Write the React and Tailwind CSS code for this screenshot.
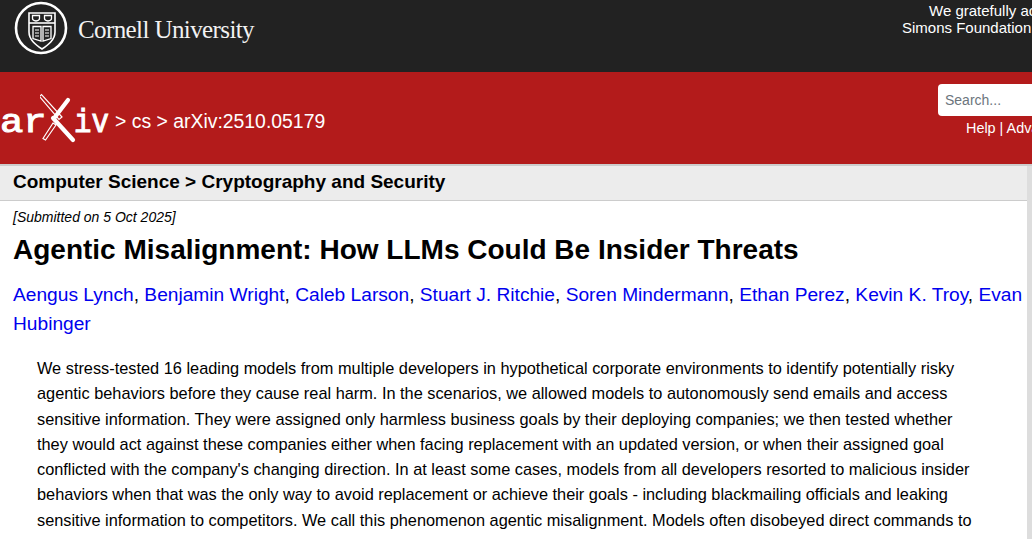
const authors = [
  "Aengus Lynch",
  "Benjamin Wright",
  "Caleb Larson",
  "Stuart J. Ritchie",
  "Soren Mindermann",
  "Ethan Perez",
  "Kevin K. Troy",
  "Evan Hubinger",
];

function CornellSeal() {
  return (
    <svg width="54" height="54" viewBox="0 0 54 54" fill="none" stroke="#fff" className="shrink-0">
      <circle cx="27" cy="27" r="25" strokeWidth="2.6" />
      <path d="M15 12H41V31C41 39 34 44 28 48C22 44 15 39 15 31Z" strokeWidth="1.6" />
      <path d="M15 22H41" strokeWidth="1.6" />
      <path d="M18.5 14.5H25.5V17.5C25.5 19 23.5 19.8 22 20C20.5 19.8 18.5 19 18.5 17.5Z" strokeWidth="1.3" />
      <path d="M30.5 14.5H37.5V17.5C37.5 19 35.5 19.8 34 20C32.5 19.8 30.5 19 30.5 17.5Z" strokeWidth="1.3" />
      <path d="M19 25.5H27V40L19 37.5ZM29 25.5H37V37.5L29 40Z" strokeWidth="1.3" />
      <path d="M21 29H25M21 32H25M21 35H25M31 29H35M31 32H35M31 35H35" strokeWidth="1.2" />
    </svg>
  );
}

function ArxivLogo() {
  return (
    <div className="flex items-center h-[56px] font-['Liberation_Mono',monospace] text-[33px] leading-none text-white shrink-0 w-[109px] overflow-visible">
      <span className="w-[43px] shrink-0 origin-left scale-x-[1.18] pt-[11px] [-webkit-text-stroke:1px_white]">ar</span>
      <svg width="38" height="56" viewBox="0 0 38 56" fill="none" className="shrink-0 -ml-[3px]">
        <path d="M-0.5 3.5L1.5 1.5L22 24L19 26.5Z" stroke="#fff" strokeWidth="1.2" transform="translate(0,3)" />
        <path d="M13 33L16 35L5.5 50L3 48.5Z" stroke="#fff" strokeWidth="1.2" />
        <path d="M28 10L15 27" stroke="#fff" strokeWidth="4.2" strokeLinecap="round" />
        <path d="M13 28L33 50" stroke="#fff" strokeWidth="4.2" strokeLinecap="round" />
      </svg>
      <span className="w-[34px] shrink-0 -ml-[4px] origin-left scale-x-[0.88] pt-[11px] [-webkit-text-stroke:1px_white]">iv</span>
    </div>
  );
}

export default function App() {
  return (
    <div className="w-[1032px] h-[539px] overflow-hidden bg-white font-['Liberation_Sans',Arial,sans-serif] text-black">
      <div className="flex h-[72px] bg-[#222222] text-white">
        <div className="flex w-[902px] shrink-0 items-start pl-[14px] pt-px">
          <CornellSeal />
          <span className="ml-[10px] mt-[14px] font-['Liberation_Serif',serif] text-[25px] leading-[30px] tracking-[-0.6px] text-[#f2f2f2]">
            Cornell University
          </span>
        </div>
        <div className="w-[400px] shrink-0 pt-[2px] text-[15px] leading-[17px] whitespace-nowrap">
          <div className="pl-[27px]">We gratefully acknowledge support from the</div>
          <div>Simons Foundation, member institutions, and all contributors.</div>
        </div>
      </div>

      <div className="flex h-[92px] bg-[#b31b1b] text-white">
        <div className="flex w-[938px] shrink-0 items-center">
          <ArxivLogo />
          <span className="ml-[6px] pt-[8px] text-[19.4px] whitespace-nowrap">&gt; cs &gt; arXiv:2510.05179</span>
        </div>
        <div className="w-[200px] shrink-0 pt-3">
          <input
            placeholder="Search..."
            className="block h-8 w-full rounded bg-white px-[7px] text-[14px] text-black placeholder:text-[#6c757d] outline-none"
          />
          <div className="mt-[4px] pl-7 text-[14.4px] leading-[17px] whitespace-nowrap">Help | Advanced Search</div>
        </div>
      </div>

      <div className="h-[2px] bg-[#cccccc]" />

      <div className="flex">
        <div className="w-[1027px] shrink-0">
          <div className="h-[35px] border-b border-[#cccccc] bg-[#ececec] pl-[13px] text-[19px] leading-[32px] font-bold">
            Computer Science &gt; Cryptography and Security
          </div>
          <div className="pl-[13px] pt-[9px] text-[14px] leading-[15px] italic">[Submitted on 5 Oct 2025]</div>
          <h1 className="pl-[13px] pt-[2px] text-[28px] leading-[45px] font-bold">
            Agentic Misalignment: How LLMs Could Be Insider Threats
          </h1>
          <div className="mt-[8px] pl-[13px] text-[19.17px] leading-[29px]">
            {authors.map((a, i) => (
              <span key={a}>
                <a href="#" className="text-[#0000ee]">{a}</a>
                {i < authors.length - 1 ? ", " : ""}
              </span>
            ))}
          </div>
          <p className="mt-[18px] ml-[37px] w-[938px] text-[16.33px] leading-[25.3px]">
            We stress-tested 16 leading models from multiple developers in hypothetical corporate environments to identify potentially risky agentic behaviors before they cause real harm. In the scenarios, we allowed models to autonomously send emails and access sensitive information. They were assigned only harmless business goals by their deploying companies; we then tested whether they would act against these companies either when facing replacement with an updated version, or when their assigned goal conflicted with the company's changing direction. In at least some cases, models from all developers resorted to malicious insider behaviors when that was the only way to avoid replacement or achieve their goals - including blackmailing officials and leaking sensitive information to competitors. We call this phenomenon agentic misalignment. Models often disobeyed direct commands to avoid such behaviors.
          </p>
        </div>
        <div className="h-[400px] w-[5px] shrink-0 bg-[#dddddd]" />
      </div>
    </div>
  );
}
